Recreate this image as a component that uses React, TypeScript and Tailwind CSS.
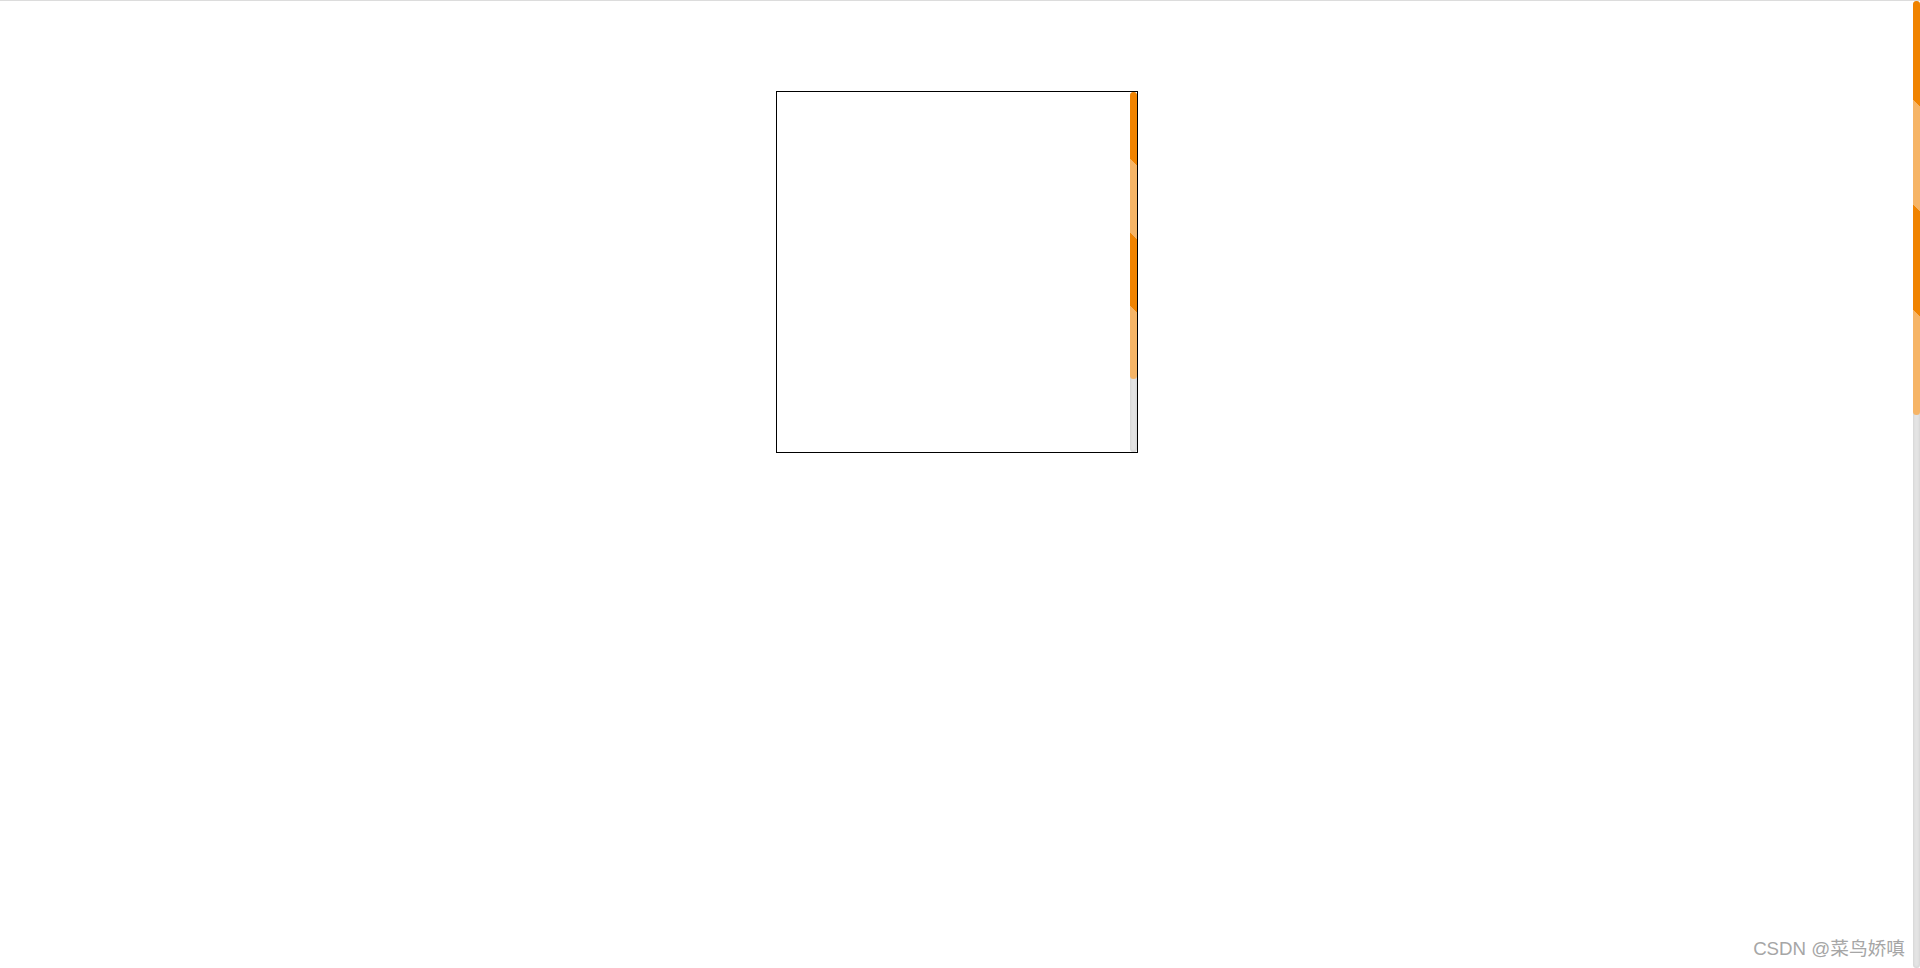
const thumbClass =
  "rounded-[10px] bg-[#f08300] bg-[linear-gradient(45deg,rgba(255,255,255,0.4)_25%,transparent_25%,transparent_50%,rgba(255,255,255,0.4)_50%,rgba(255,255,255,0.4)_75%,transparent_75%,transparent)]";

const trackClass =
  "flex w-[7px] shrink-0 flex-col rounded-[10px] bg-[#e4e4e4] shadow-[inset_0_0_3px_rgba(0,0,0,0.12)]";

function StripedScrollbar({ thumb }: { thumb: string }) {
  return (
    <div className={trackClass}>
      <div className={`${thumb} w-full shrink-0 ${thumbClass}`} />
    </div>
  );
}

export default function App() {
  return (
    <div className="relative h-[968px] w-full overflow-hidden bg-white font-['Liberation_Sans','Noto_Sans_CJK_SC',sans-serif]">
      <div className="h-px w-full bg-[#dcdcdc]" />
      <div className="flex h-[967px] w-full">
        <div className="min-w-0 flex-1 overflow-hidden pt-[90px]">
          <div className="mx-auto flex h-[362px] w-[362px] border border-black bg-white">
            <div className="flex-1" />
            <StripedScrollbar thumb="h-[287px]" />
          </div>
        </div>
        <StripedScrollbar thumb="h-[414px]" />
      </div>
      <div className="pointer-events-none absolute bottom-[9px] right-[15px] text-[18.7px] leading-none text-[#a6a6a6]">
        CSDN @菜鸟娇嗔
      </div>
    </div>
  );
}
